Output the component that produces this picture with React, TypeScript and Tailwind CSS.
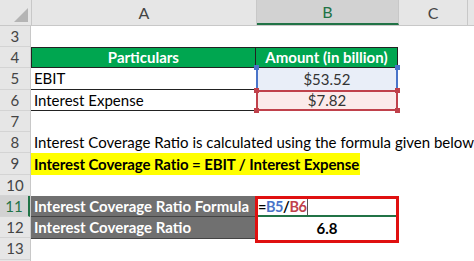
import React from "react";

const rowH = [21, 21, 22, 21, 21, 21, 22, 21, 21, 21, 22];
const rows = [3, 4, 5, 6, 7, 8, 9, 10, 11, 12, 13];

function Handle({ cls }: { cls: string }) {
  return <div className={`absolute w-[5px] h-[5px] ${cls}`} />;
}

export default function App() {
  const font = { fontFamily: "Lato, 'Open Sans', sans-serif" };
  return (
    <div className="w-[474px] h-[261px] overflow-hidden bg-white text-[15px] text-black relative" style={font}>
      {/* header row */}
      <div className="flex h-[26px] bg-[#e6e6e6] border-b border-[#c8c8c8]">
        <div className="w-[32px] h-full border-r border-[#c8c8c8] relative">
          <div className="absolute right-[3px] bottom-[3px] w-0 h-0 border-l-[14px] border-l-transparent border-b-[14px] border-b-[#b4b4b4]" />
        </div>
        <div className="w-[225px] h-full flex items-center justify-center border-r border-[#c8c8c8] text-[#444] text-[16px]">A</div>
        <div className="w-[142px] h-full flex items-center justify-center border-r border-[#c8c8c8] bg-[#d2d2d2] text-[#217346] text-[16px] border-b-2 border-b-[#217346]">B</div>
        <div className="w-[69px] h-full flex items-center justify-center border-r border-[#c8c8c8] text-[#444] text-[16px]">C</div>
        <div className="flex-1" />
      </div>
      <div className="flex">
        {/* row numbers */}
        <div className="w-[32px] flex flex-col bg-[#e6e6e6] border-r border-[#c8c8c8]">
          {rows.map((r, i) => (
            <div
              key={r}
              style={{ height: rowH[i] }}
              className={`flex items-center justify-center border-b border-[#d4d4d4] text-[15px] ${r === 11 ? "bg-[#d2d2d2] text-[#217346] border-r-2 border-r-[#217346]" : "text-[#444]"}`}
            >
              {r}
            </div>
          ))}
        </div>
        {/* cells */}
        <div className="flex-1 flex flex-col">
          {/* 3 */}
          <div style={{ height: 21 }} />
          {/* 4 */}
          <div style={{ height: 21 }} className="flex">
            <div className="w-[225px] bg-[#00a650] border border-[#222] text-white font-bold flex items-center justify-center">Particulars</div>
            <div className="w-[142px] bg-[#00a650] border border-l-0 border-[#222] text-white font-bold flex items-center justify-center">Amount (in billion)</div>
          </div>
          {/* 5 */}
          <div style={{ height: 22 }} className="flex">
            <div className="w-[225px] border-b border-[#222] flex items-center pl-[3px]">EBIT</div>
            <div className="w-[142px] relative bg-[#e9eef8] border-x-2 border-[#4a74c9] flex items-center justify-center text-[#333]">
              $53.52
              <Handle cls="bg-[#4a74c9] -left-[4px] -top-[3px]" />
              <Handle cls="bg-[#4a74c9] -right-[4px] -top-[3px]" />
            </div>
          </div>
          {/* 6 */}
          <div style={{ height: 21 }} className="flex">
            <div className="w-[225px] border-b border-[#222] flex items-center pl-[3px]">Interest Expense</div>
            <div className="w-[142px] relative bg-[#fbeaea] border-2 border-[#c0414b] flex items-center justify-center text-[#333]">
              $7.82
              <Handle cls="bg-[#c0414b] -left-[4px] -top-[4px]" />
              <Handle cls="bg-[#c0414b] -right-[4px] -top-[4px]" />
              <Handle cls="bg-[#c0414b] -left-[4px] -bottom-[4px]" />
              <Handle cls="bg-[#c0414b] -right-[4px] -bottom-[4px]" />
            </div>
          </div>
          {/* 7 */}
          <div style={{ height: 21 }} />
          {/* 8 */}
          <div style={{ height: 21 }} className="flex items-center pl-[3px] whitespace-nowrap">
            Interest Coverage Ratio is calculated using the formula given below
          </div>
          {/* 9 */}
          <div style={{ height: 22 }} className="flex">
            <div className="bg-[#ffff00] font-bold flex items-center pl-[3px] pr-[1px] whitespace-nowrap tracking-[-0.1px]">
              Interest Coverage Ratio = EBIT / Interest Expense
            </div>
          </div>
          {/* 10 */}
          <div style={{ height: 21 }} />
          {/* 11 + 12 */}
          <div className="flex">
            <div className="w-[225px] flex flex-col">
              <div style={{ height: 21 }} className="bg-[#707070] border-b border-[#444] text-white font-bold flex items-center pl-[3px] whitespace-nowrap overflow-hidden">
                Interest Coverage Ratio Formula
              </div>
              <div style={{ height: 22 }} className="bg-[#707070] border-b border-[#444] text-white font-bold flex items-center pl-[3px] whitespace-nowrap">
                Interest Coverage Ratio
              </div>
            </div>
            <div className="w-[144px] -ml-[1px] border-[3px] border-[#e01010] flex flex-col">
              <div className="h-[18px] border-b-2 border-[#217346] flex items-stretch">
                <div className="w-[50px] border-r border-[#555] flex items-center pl-[0px] font-bold text-[14.5px] tracking-[-0.4px] whitespace-nowrap">
                  <span>=</span>
                  <span className="text-[#4a74c9]">B5</span>
                  <span>/</span>
                  <span className="text-[#c0414b]">B6</span>
                </div>
              </div>
              <div className="flex-1 flex items-center justify-center font-bold">6.8</div>
            </div>
          </div>
          {/* 13 */}
          <div style={{ height: 21 }} />
        </div>
      </div>
    </div>
  );
}
